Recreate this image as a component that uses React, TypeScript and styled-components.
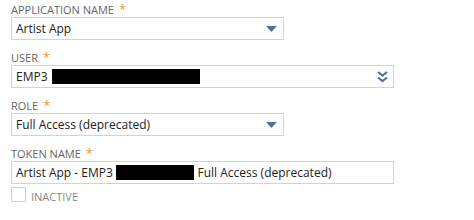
import React from "react";
import styled, { createGlobalStyle } from "styled-components";

const Global = createGlobalStyle`
  html, body { margin: 0; padding: 0; background: #fff; }
  body { font-family: "Open Sans", "Liberation Sans", sans-serif; }
`;

const Form = styled.div`
  display: flex;
  flex-direction: column;
  padding: 2px 0 0 11px;
`;

const Field = styled.div<{ $last?: boolean }>`
  display: flex;
  flex-direction: column;
  height: ${(p) => (p.$last ? "auto" : "48px")};
`;

const Label = styled.div`
  font-size: 11px;
  line-height: 15px;
  color: #666;
  text-transform: uppercase;
  display: flex;
  align-items: center;
  gap: 5px;
`;

const Star = styled.span`
  color: #e39b2c;
  font-size: 13px;
  line-height: 15px;
`;

const Box = styled.div<{ $w: number }>`
  box-sizing: border-box;
  width: ${(p) => p.$w}px;
  height: 23px;
  border: 1px solid #d2d2d2;
  display: flex;
  align-items: center;
  padding: 0 4px;
  font-size: 12px;
  color: #222;
  white-space: nowrap;
`;

const Text = styled.span`
  flex: 0 0 auto;
`;

const Spacer = styled.span`
  flex: 1;
`;

const Redact = styled.span<{ $w: number; $ml: number }>`
  display: inline-block;
  width: ${(p) => p.$w}px;
  height: 15px;
  background: #000;
  margin: 0 3px 0 ${(p) => p.$ml}px;
`;

const CheckRow = styled.div`
  display: flex;
  align-items: flex-start;
  gap: 5px;
  margin-top: 3px;
`;

const Check = styled.span`
  box-sizing: border-box;
  width: 15px;
  height: 15px;
  border: 1px solid #d0d0d0;
`;

const CheckLabel = styled.span`
  font-size: 11px;
  line-height: 15px;
  color: #888;
  text-transform: uppercase;
  padding-top: 2px;
`;

const Caret = () => (
  <svg width="11" height="6" viewBox="0 0 11 6">
    <path d="M0 0 L11 0 L5.5 6 Z" fill="#5d6f8e" />
  </svg>
);

const DoubleChevron = () => (
  <svg width="11" height="12" viewBox="0 0 11 12">
    <path d="M1 1 L5.5 4.5 L10 1" fill="none" stroke="#5d6f8e" strokeWidth="2.2" />
    <path d="M1 6.5 L5.5 10 L10 6.5" fill="none" stroke="#5d6f8e" strokeWidth="2.2" />
  </svg>
);

export default function App() {
  return (
    <>
      <Global />
      <Form>
        <Field>
          <Label>
            Application Name <Star>*</Star>
          </Label>
          <Box $w={273}>
            <Text>Artist App</Text>
            <Spacer />
            <Caret />
            <span style={{ width: 2 }} />
          </Box>
        </Field>
        <Field>
          <Label>
            User <Star>*</Star>
          </Label>
          <Box $w={383}>
            <Text>EMP3</Text>
            <Redact $w={148} $ml={4} />
            <Spacer />
            <DoubleChevron />
            <span style={{ width: 1 }} />
          </Box>
        </Field>
        <Field>
          <Label>
            Role <Star>*</Star>
          </Label>
          <Box $w={273}>
            <Text>Full Access (deprecated)</Text>
            <Spacer />
            <Caret />
            <span style={{ width: 2 }} />
          </Box>
        </Field>
        <Field $last>
          <Label>
            Token Name <Star>*</Star>
          </Label>
          <Box $w={383}>
            <Text>Artist App - EMP3 (</Text>
            <Redact $w={78} $ml={-3} />
            <Text>Full Access (deprecated)</Text>
          </Box>
        </Field>
        <CheckRow>
          <Check />
          <CheckLabel>Inactive</CheckLabel>
        </CheckRow>
      </Form>
    </>
  );
}
